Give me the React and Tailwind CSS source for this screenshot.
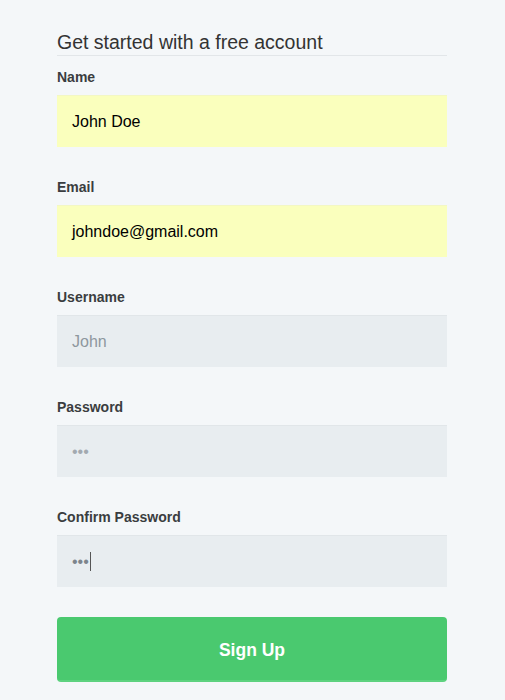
const fields = [
  { label: "Name", value: "John Doe", filled: true },
  { label: "Email", value: "johndoe@gmail.com", filled: true },
  { label: "Username", value: "John", placeholder: true },
  { label: "Password", value: "•••", mask: true },
  { label: "Confirm Password", value: "•••", mask: true, caret: true },
];

const App = () => {
  return (
    <div
      className="min-h-[700px] bg-[#f4f7f9] text-[#333]"
      style={{ fontFamily: '"Liberation Sans", Arial, sans-serif' }}
    >
      <form className="ml-[57px] w-[390px] pt-[30px]">
        {/* heading */}
        <h2 className="border-b border-[#e2e6e9] pb-[1px] text-[19.5px] leading-6 font-normal text-[#333]">
          Get started with a free account
        </h2>

        <div className="mt-[13px]">
          {fields.map((f, i) => (
            <div key={i} className="mb-[32px] last:mb-[30px]">
              <label className="mb-[10px] block text-[14px] leading-4 font-bold text-[#3a3d40]">
                {f.label}
              </label>
              <div
                className={`flex h-[52px] items-center border-t px-[15px] text-[16px] ${
                  f.filled
                    ? "border-[#f3f7c4] bg-[#faffbd] text-black"
                    : "border-[#e1e6e9] bg-[#e8edf0] text-[#8e979e]"
                }`}
              >
                {f.mask ? (
                  <span className="flex items-center">
                    <span
                      className={`text-[16px] ${
                        f.caret ? "text-[#7d858c]" : "text-[#a3aab0]"
                      }`}
                    >
                      {f.value}
                    </span>
                    {f.caret && (
                      <span className="ml-px inline-block h-[19px] w-px bg-[#555]" />
                    )}
                  </span>
                ) : (
                  <span>{f.value}</span>
                )}
              </div>
            </div>
          ))}
        </div>

        <button
          type="button"
          className="h-[65px] w-full rounded-[4px] border-b-2 border-[#5dd27f] bg-[#4ac96f] pt-[3px] text-[17.5px] font-bold text-white"
        >
          Sign Up
        </button>
      </form>
    </div>
  );
};

export default App;
